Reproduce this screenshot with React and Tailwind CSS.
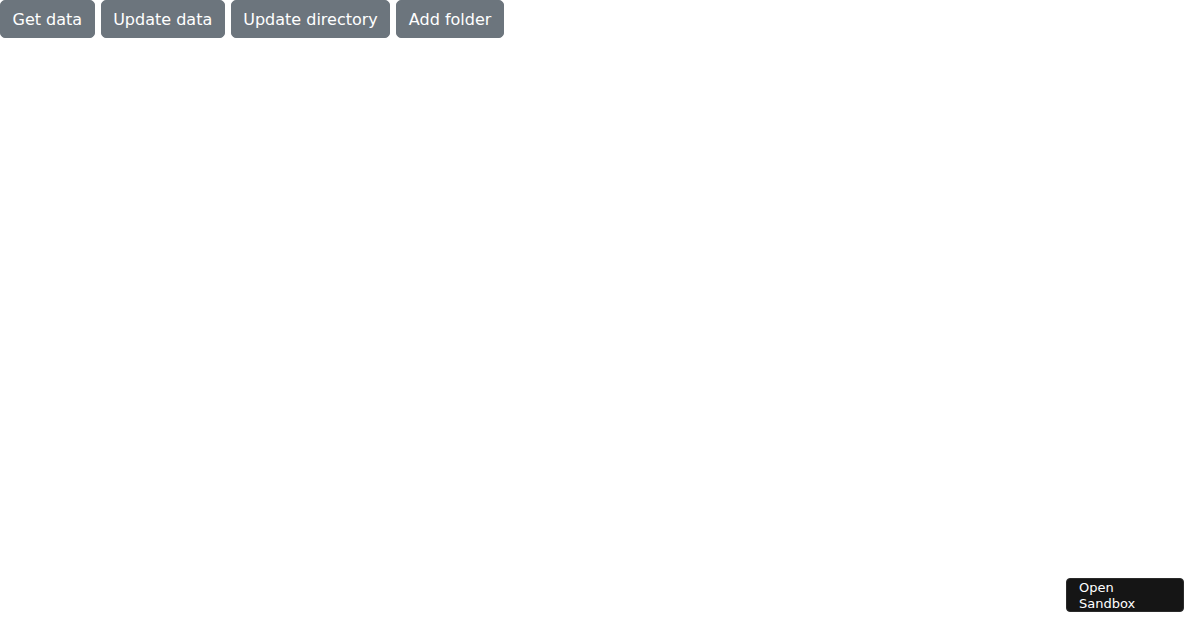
export default function App() {
  const buttons = ['Get data', 'Update data', 'Update directory', 'Add folder'];
  return (
    <div className="relative w-[1200px] h-[630px] bg-white font-['DejaVu_Sans',sans-serif]">
      <div className="flex gap-[6px]">
        {buttons.map(b => (
          <button
            key={b}
            className="h-[38px] px-[11.5px] pt-[1px] rounded-[5px] border border-[#6c757d] bg-[#6c757d] text-white text-[16px] leading-[24px] font-['DejaVu_Sans',sans-serif]"
          >
            {b}
          </button>
        ))}
      </div>

      <div className="absolute right-[16px] bottom-[18px] w-[118px] h-[34px] rounded-[4px] bg-[#151515] border border-[#2a2a2a] pl-[12px] pt-[1px] text-white text-[13px] leading-[16px]">
        <span className="block w-[70px]">Open Sandbox</span>
      </div>
    </div>
  );
}
